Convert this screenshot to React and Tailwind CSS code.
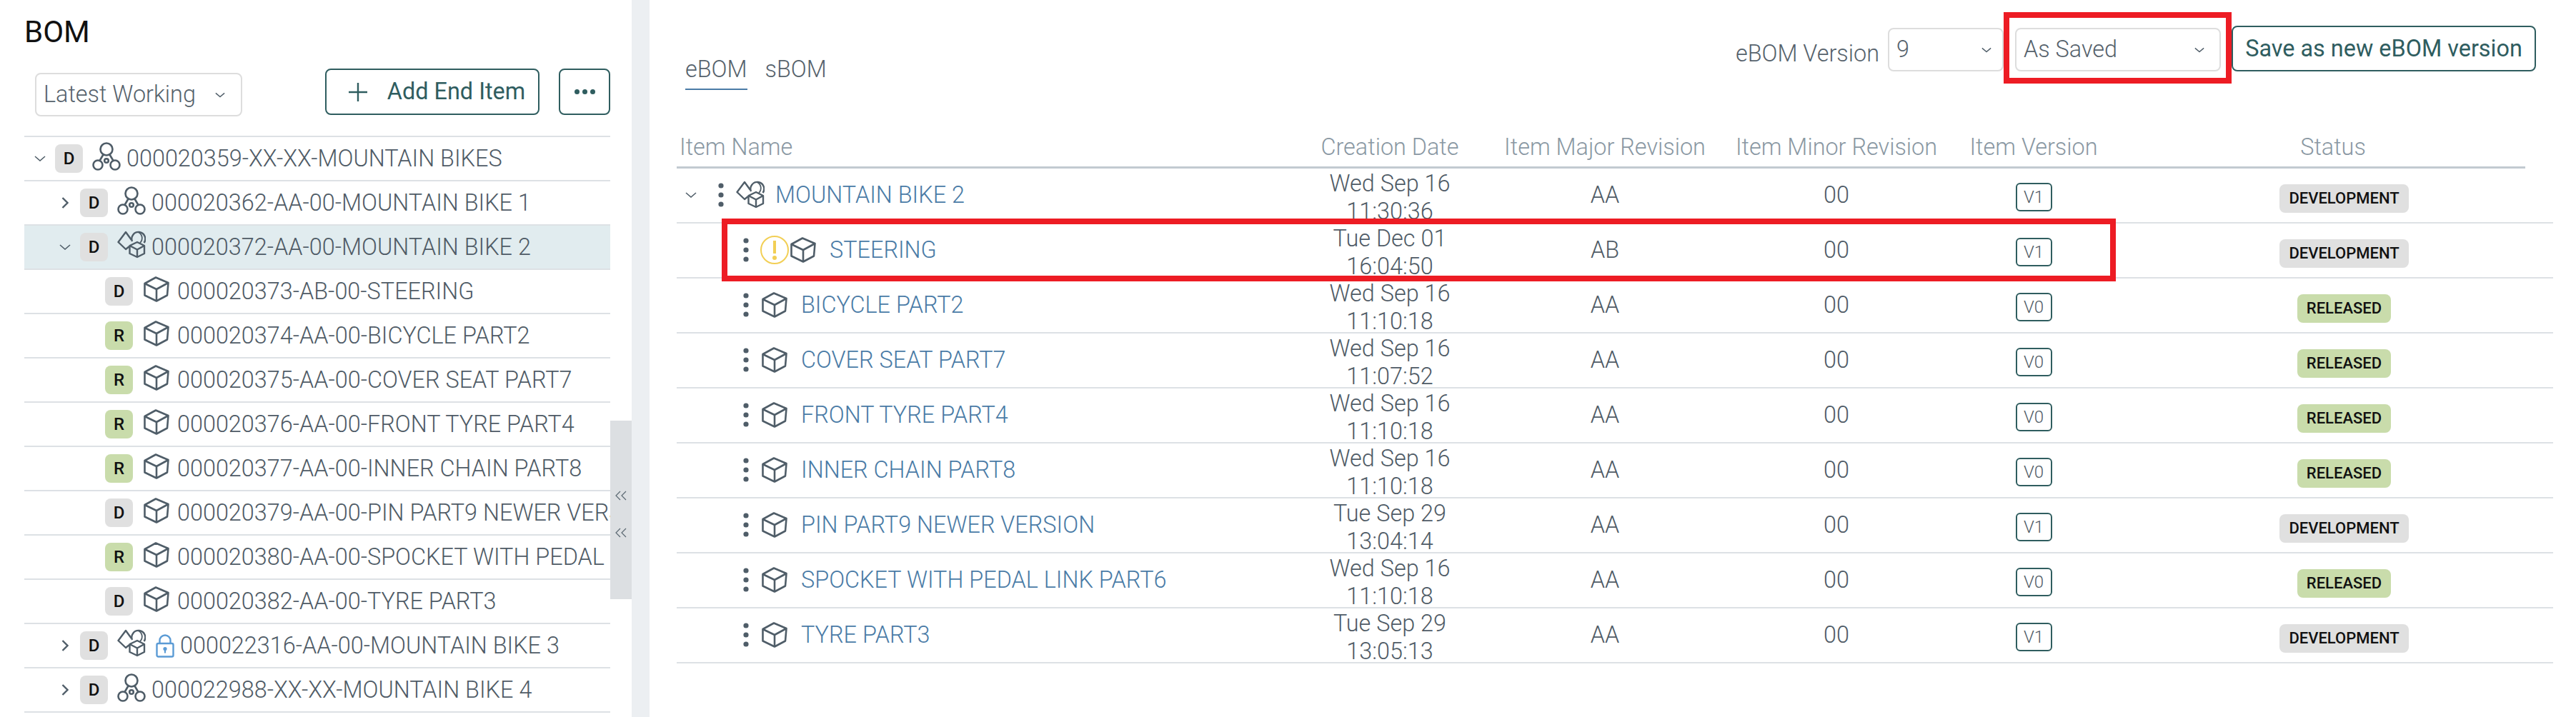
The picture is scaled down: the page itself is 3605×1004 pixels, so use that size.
import React from 'react';

const font = { fontFamily: 'Roboto, sans-serif' };

const treeRows = [
  { level: 0, toggle: 'open', status: 'D', icon: 'assembly', label: '000020359-XX-XX-MOUNTAIN BIKES' },
  { level: 1, toggle: 'closed', status: 'D', icon: 'assembly', label: '000020362-AA-00-MOUNTAIN BIKE 1' },
  { level: 1, toggle: 'open', status: 'D', icon: 'mixed', label: '000020372-AA-00-MOUNTAIN BIKE 2', selected: true },
  { level: 2, status: 'D', icon: 'cube', label: '000020373-AB-00-STEERING' },
  { level: 2, status: 'R', icon: 'cube', label: '000020374-AA-00-BICYCLE PART2' },
  { level: 2, status: 'R', icon: 'cube', label: '000020375-AA-00-COVER SEAT PART7' },
  { level: 2, status: 'R', icon: 'cube', label: '000020376-AA-00-FRONT TYRE PART4' },
  { level: 2, status: 'R', icon: 'cube', label: '000020377-AA-00-INNER CHAIN PART8' },
  { level: 2, status: 'D', icon: 'cube', label: '000020379-AA-00-PIN PART9 NEWER VERSION' },
  { level: 2, status: 'R', icon: 'cube', label: '000020380-AA-00-SPOCKET WITH PEDAL LINK PART6' },
  { level: 2, status: 'D', icon: 'cube', label: '000020382-AA-00-TYRE PART3' },
  { level: 1, toggle: 'closed', status: 'D', icon: 'mixed', label: '000022316-AA-00-MOUNTAIN BIKE 3', locked: true },
  { level: 1, toggle: 'closed', status: 'D', icon: 'assembly', label: '000022988-XX-XX-MOUNTAIN BIKE 4' },
];

const tableRows = [
  { name: 'MOUNTAIN BIKE 2', top: true, day: 'Wed Sep 16', time: '11:30:36', major: 'AA', version: 'V1', status: 'DEVELOPMENT' },
  { name: 'STEERING', warn: true, day: 'Tue Dec 01', time: '16:04:50', major: 'AB', version: 'V1', status: 'DEVELOPMENT' },
  { name: 'BICYCLE PART2', day: 'Wed Sep 16', time: '11:10:18', major: 'AA', version: 'V0', status: 'RELEASED' },
  { name: 'COVER SEAT PART7', day: 'Wed Sep 16', time: '11:07:52', major: 'AA', version: 'V0', status: 'RELEASED' },
  { name: 'FRONT TYRE PART4', day: 'Wed Sep 16', time: '11:10:18', major: 'AA', version: 'V0', status: 'RELEASED' },
  { name: 'INNER CHAIN PART8', day: 'Wed Sep 16', time: '11:10:18', major: 'AA', version: 'V0', status: 'RELEASED' },
  { name: 'PIN PART9 NEWER VERSION', day: 'Tue Sep 29', time: '13:04:14', major: 'AA', version: 'V1', status: 'DEVELOPMENT' },
  { name: 'SPOCKET WITH PEDAL LINK PART6', day: 'Wed Sep 16', time: '11:10:18', major: 'AA', version: 'V0', status: 'RELEASED' },
  { name: 'TYRE PART3', day: 'Tue Sep 29', time: '13:05:13', major: 'AA', version: 'V1', status: 'DEVELOPMENT' },
];

function CubeIcon({ className }) {
  return (
    <svg viewBox="0 0 36 36" fill="none" stroke="#4f5d68" strokeWidth="2.6" strokeLinejoin="round" className={className}>
      <path d="M17 1.5 34.5 9 33 26.5 18 34.5 1.5 26.5 1.5 10Z" />
      <path d="M1.5 10 18 18 34.5 9M18 18V34.5" />
    </svg>
  );
}

function AssemblyIcon({ className }) {
  return (
    <svg viewBox="0 0 40 40" fill="none" stroke="#4f5d68" strokeWidth="2.6" className={className}>
      <circle cx="20" cy="10" r="8.5" />
      <circle cx="8" cy="32" r="6.5" />
      <circle cx="32" cy="32" r="6.5" />
      <circle cx="20" cy="26" r="2.8" />
      <path d="M15.5 17.5 10.5 26M24.5 17.5 29.5 26" />
    </svg>
  );
}

function MixedIcon({ className }) {
  return (
    <svg viewBox="0 0 40 40" fill="none" stroke="#4f5d68" strokeWidth="2.4" strokeLinejoin="round" className={className}>
      <path d="M20 13 12 2 1.5 16 12 26 17 22" />
      <path d="M21 15A9.5 9.5 0 1 1 37.5 17" />
      <path d="M30 2.5A9 9 0 0 1 32 17" strokeWidth="1.8" />
      <path d="M28 16 38 21V32L28 37 17.5 32V21Z" />
      <path d="M17.5 21 28 26.5 38 21M28 26.5V37" />
    </svg>
  );
}

function ChevronDown({ className }) {
  return (
    <svg viewBox="0 0 16 8" fill="none" stroke="#4f5d68" strokeWidth="1.6" className={className}>
      <path d="M1 1 8 7 15 1" />
    </svg>
  );
}

function ChevronRight({ className }) {
  return (
    <svg viewBox="0 0 10 16" fill="none" stroke="#4f5d68" strokeWidth="2.4" className={className}>
      <path d="M1.5 1 8.5 8 1.5 15" />
    </svg>
  );
}

function DoubleChevron() {
  return (
    <svg viewBox="0 0 16 14" fill="none" stroke="#5b6872" strokeWidth="1.2" className="h-[14px] w-[16px]">
      <path d="M7 1 1 7 7 13M15 1 9 7 15 13" />
    </svg>
  );
}

function Kebab() {
  return (
    <svg viewBox="0 0 16 36" fill="#4f5d68" className="h-[36px] w-[16px] shrink-0">
      <circle cx="8" cy="5" r="3.6" />
      <circle cx="8" cy="18" r="3.6" />
      <circle cx="8" cy="31" r="3.6" />
    </svg>
  );
}

function LockIcon() {
  return (
    <svg viewBox="0 0 26 33" fill="none" stroke="#5b9bd5" strokeWidth="2.4" className="ml-[14px] h-[33px] w-[26px] shrink-0">
      <rect x="1.5" y="13" width="23" height="18.5" rx="2" />
      <path d="M5.5 13V9A7.5 7.5 0 0 1 20.5 9V13" />
      <circle cx="13" cy="20.5" r="2.6" fill="#5b9bd5" stroke="none" />
      <path d="M13 21V26.5" strokeWidth="2.2" />
    </svg>
  );
}

function Dropdown({ label, className }) {
  return (
    <div className={`flex h-[61px] items-center justify-between rounded-lg border-2 border-[#dddddd] bg-white pl-[10px] text-[32.4px] font-light text-[#56626c] ${className}`}>
      <span>{label}</span>
      <ChevronDown className="h-[8px] w-[14px]" />
    </div>
  );
}

function TreeRow({ row }) {
  const indent = ['pl-0', 'pl-[35px]', 'pl-[70px]'][row.level];
  return (
    <div className={`flex h-[62px] items-center overflow-hidden whitespace-nowrap border-t-2 border-[#dde1e5] ${indent} ${row.selected ? 'bg-[#e1ecef]' : ''}`}>
      <div className="flex w-[43px] shrink-0 items-center justify-center">
        {row.toggle === 'open' && <ChevronDown className="h-[8px] w-[16px]" />}
        {row.toggle === 'closed' && <ChevronRight className="h-[16px] w-[10px]" />}
      </div>
      <div className={`flex h-[40px] w-[39px] shrink-0 items-center justify-center rounded-lg text-[24px] font-medium text-[#111111] ${row.status === 'R' ? 'bg-[#c9dcab]' : 'bg-[#e0e0e0]'}`}>
        {row.status}
      </div>
      {row.icon === 'cube' && <CubeIcon className="-mt-[6px] ml-[15px] h-[36px] w-[36px] shrink-0" />}
      {row.icon === 'assembly' && <AssemblyIcon className="-mt-[6px] ml-[13px] h-[40px] w-[40px] shrink-0" />}
      {row.icon === 'mixed' && <MixedIcon className="-mt-[6px] ml-[13px] h-[40px] w-[40px] shrink-0" />}
      {row.locked && <LockIcon />}
      <span className={`text-[32.4px] font-light text-[#4f5b66] ${row.icon === 'cube' ? 'ml-[11px]' : 'ml-[8px]'}`}>{row.label}</span>
    </div>
  );
}

function NameCell({ row }) {
  if (row.top) {
    return (
      <div className="flex items-center pl-[12px]">
        <ChevronDown className="h-[8px] w-[16px]" />
        <div className="ml-[26px]"><Kebab /></div>
        <MixedIcon className="ml-[13px] h-[40px] w-[40px]" />
        <span className="ml-[15px] text-[#4a7ba6]">{row.name}</span>
      </div>
    );
  }
  return (
    <div className="flex items-center pl-[89px]">
      <Kebab />
      {row.warn && (
        <div className="relative ml-[12px] h-[40px] w-[40px] rounded-full border-2 border-[#f2cf55]">
          <div className="mx-auto mt-[5px] h-[18px] w-[4px] bg-[#f2cf55]" />
          <div className="mx-auto mt-[3px] h-[6px] w-[6px] rounded-full bg-[#f2cf55]" />
        </div>
      )}
      <CubeIcon className={`h-[36px] w-[36px] ${row.warn ? 'ml-[2px]' : 'ml-[14px]'}`} />
      <span className="ml-[19px] text-[#4a7ba6]">{row.name}</span>
    </div>
  );
}

function TableRow({ row }) {
  return (
    <div className="grid h-[77px] w-[2626px] grid-cols-[853px_290px_312px_336px_216px_1fr] grid-rows-[75px] items-center border-b-2 border-[#dde1e5] text-[32.4px] font-light text-[#4f5b66]">
      <NameCell row={row} />
      <div className="mt-[6px] text-center leading-[39px]">
        <div>{row.day}</div>
        <div>{row.time}</div>
      </div>
      <div className="text-center">{row.major}</div>
      <div className="text-center">00</div>
      <div className="flex justify-center">
        <div className="mt-[4px] flex h-[40px] w-[51px] items-center justify-center rounded-md border-2 border-[#2f5d5f] text-[24px]">{row.version}</div>
      </div>
      <div className="flex justify-center pl-[34px]">
        <div className={`mt-[8px] flex h-[40px] items-center justify-center rounded-lg px-[13px] text-[22px] font-medium leading-none text-[#111111] ${row.status === 'RELEASED' ? 'bg-[#c9dcab]' : 'bg-[#e0e0e0]'}`}>
          {row.status}
        </div>
      </div>
    </div>
  );
}

export default function App() {
  return (
    <div style={font} className="relative flex h-[1004px] w-[3605px] overflow-hidden bg-white">
      <aside className="relative w-[884px] shrink-0 pl-[34px] pr-[30px]">
        <h1 className="pt-[21px] text-[42px] leading-[48px] text-[#111111]">BOM</h1>
        <div className="mt-[27px] flex h-[94px] items-start">
          <Dropdown label="Latest Working" className="ml-[15px] mt-[6px] w-[290px] pr-[22px]" />
          <button type="button" className="ml-[116px] flex h-[65px] w-[300px] items-center justify-center gap-[27px] rounded-lg border-2 border-[#2f5d5f] pl-[12px] text-[32.4px] text-[#2f5d5f]">
            <svg viewBox="0 0 28 28" stroke="#2f5d5f" strokeWidth="2.4" className="h-[28px] w-[28px]">
              <path d="M14 1V27M1 14H27" />
            </svg>
            Add End Item
          </button>
          <button type="button" className="ml-[27px] flex h-[65px] w-[72px] items-center justify-center gap-[4px] rounded-lg border-2 border-[#2f5d5f]">
            <span className="h-[7px] w-[7px] rounded-full bg-[#2f5d5f]" />
            <span className="h-[7px] w-[7px] rounded-full bg-[#2f5d5f]" />
            <span className="h-[7px] w-[7px] rounded-full bg-[#2f5d5f]" />
          </button>
        </div>
        <div className="border-b-2 border-[#dde1e5]">
          {treeRows.map((row) => (
            <TreeRow key={row.label} row={row} />
          ))}
        </div>
        <div className="absolute left-[854px] top-[589px] flex h-[250px] w-[30px] flex-col items-center gap-[38px] bg-[#dcdfe2] pt-[98px]">
          <DoubleChevron />
          <DoubleChevron />
        </div>
      </aside>

      <div className="w-[25px] shrink-0 bg-[#eceff2]" />

      <main className="min-w-0 flex-1 pl-[38px]">
        <div className="flex h-[170px] items-start justify-between">
          <div className="ml-[12px] mt-[75px] flex gap-[25px] text-[32.4px] font-light text-[#56626c]">
            <div className="h-[51px] border-b-2 border-[#4a7ba6] leading-[44px]">eBOM</div>
            <div className="leading-[44px]">sBOM</div>
          </div>
          <div className="mr-[56px] mt-[36px] flex items-start">
            <span className="mr-[12px] mt-[15px] text-[32.4px] font-light text-[#56626c]">eBOM Version</span>
            <Dropdown label="9" className="mt-[3px] w-[162px] pr-[15px]" />
            <Dropdown label="As Saved" className="ml-[16px] mt-[3px] w-[288px] pr-[21px]" />
            <button type="button" className="ml-[15px] h-[64px] w-[426px] rounded-lg border-2 border-[#2f5d5f] text-[32.4px] text-[#2f5d5f]">
              Save as new eBOM version
            </button>
          </div>
        </div>
        <div className="grid h-[66px] w-[2587px] grid-cols-[853px_290px_312px_336px_216px_1fr] border-b-[3px] border-[#c2cad1] pt-[6px] text-[32.4px] font-light leading-[60px] text-[#8a98a3]">
          <div className="pl-[4px]">Item Name</div>
          <div className="text-center">Creation Date</div>
          <div className="whitespace-nowrap text-center">Item Major Revision</div>
          <div className="whitespace-nowrap text-center">Item Minor Revision</div>
          <div className="whitespace-nowrap text-center">Item Version</div>
          <div className="pl-[42px] text-center">Status</div>
        </div>
        {tableRows.map((row) => (
          <TableRow key={row.name} row={row} />
        ))}
      </main>

      <div className="absolute left-[1010px] top-[306px] h-[88px] w-[1951px] border-[8px] border-[#ed1c24]" />
      <div className="absolute left-[2804px] top-[17px] h-[100px] w-[319px] border-[8px] border-[#ed1c24]" />
    </div>
  );
}
